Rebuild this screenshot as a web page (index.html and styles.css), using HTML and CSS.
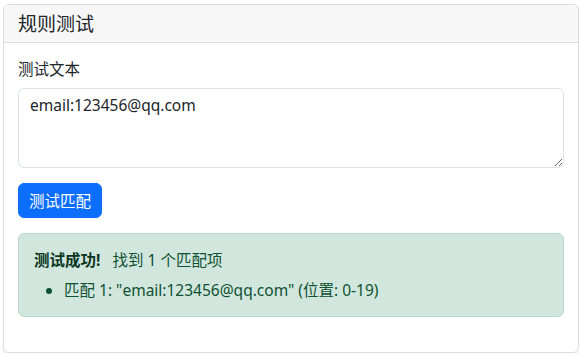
FILE: index.html
```html
<!DOCTYPE html>
<html lang="zh-CN">
<head>
<meta charset="utf-8">
<link rel="stylesheet" href="styles.css">
</head>
<body>
<div class="card">
  <div class="card-header"><h5 class="card-title">规则测试</h5></div>
  <div class="card-body">
    <label class="form-label" for="t">测试文本</label>
    <textarea id="t" class="form-control">email:123456@qq.com</textarea>
    <button class="btn">测试匹配</button>
    <div class="alert">
      <p class="alert-head"><strong>测试成功!</strong>&nbsp;&nbsp; 找到 1 个匹配项</p>
      <ul class="match-list">
        <li>匹配 1: "email:123456@qq.com" (位置: 0-19)</li>
      </ul>
    </div>
  </div>
</div>
</body>
</html>
```
FILE: styles.css
```css
* { box-sizing: border-box; }
body {
  margin: 4px 3px;
  font-family: "Noto Sans", "Noto Sans CJK SC", sans-serif;
  font-size: 15.5px;
  color: #212529;
  background: #fff;
}
.card {
  width: 576px;
  border: 1px solid #dcdcdc;
  border-radius: 6px;
  box-shadow: 0 1px 3px rgba(0,0,0,0.12);
  overflow: hidden;
}
.card-header {
  background: #f7f7f7;
  border-bottom: 1px solid #dcdcdc;
  height: 38px;
  padding: 0 14px 1px;
  display: flex;
  align-items: center;
}
.card-title {
  margin: 0;
  font-size: 19px;
  font-weight: 400;
  color: #212529;
}
.card-body {
  padding: 14px 14px 35px;
  display: flex;
  flex-direction: column;
  align-items: flex-start;
}
.form-label {
  display: block;
  height: 22px;
  line-height: 22px;
  margin-top: 1px;
  margin-bottom: 8px;
}
.form-control {
  width: 100%;
  height: 80px;
  border: 1px solid #dee2e6;
  border-radius: 6px;
  padding: 5px 11px;
  font-family: inherit;
  font-size: 15.5px;
  color: #212529;
  resize: vertical;
  margin: 0 0 15px;
}
.btn {
  height: 35px;
  padding: 0 10px;
  background: #0d6efd;
  color: #fff;
  border: 1px solid #0d6efd;
  border-radius: 6px;
  font-family: inherit;
  font-size: 15.5px;
  margin-bottom: 15px;
}
.alert {
  width: 100%;
  background: #d1e7dd;
  border: 1px solid #badbcc;
  border-radius: 6px;
  color: #0f5132;
  padding: 15px 15px 10px;
  height: 84px;
}
.alert-head {
  margin: 0 0 8px;
  line-height: 22px;
}
.alert-head strong { color: #0a3622; font-weight: 700; }
.match-list {
  margin: 0;
  padding-left: 30px;
  line-height: 22px;
}
```
